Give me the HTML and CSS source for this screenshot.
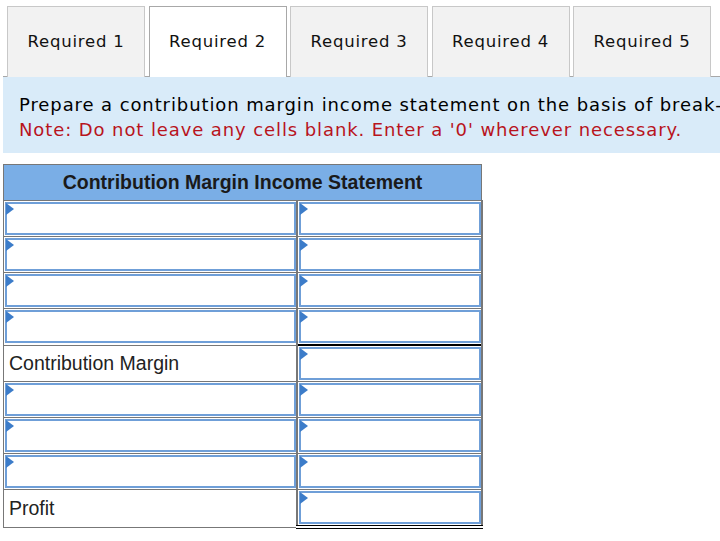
FILE: index.html
```html
<!DOCTYPE html>
<html>
<head>
<meta charset="utf-8">
<link rel="stylesheet" href="styles.css">
</head>
<body>
<div class="tabs">
  <div class="tab">Required 1</div>
  <div class="tab active">Required 2</div>
  <div class="tab">Required 3</div>
  <div class="tab">Required 4</div>
  <div class="tab">Required 5</div>
</div>
<div class="panel">
  <div class="line">Prepare a contribution margin income statement on the basis of break-even sales.</div>
  <div class="note">Note: Do not leave any cells blank. Enter a '0' wherever necessary.</div>
</div>
<table class="stmt">
  <colgroup><col class="c1"><col class="c2"></colgroup>
  <tr><th colspan="2">Contribution Margin Income Statement</th></tr>
  <tr><td><div class="inp"></div></td><td><div class="inp"></div></td></tr>
  <tr><td><div class="inp"></div></td><td><div class="inp"></div></td></tr>
  <tr><td><div class="inp"></div></td><td><div class="inp"></div></td></tr>
  <tr><td><div class="inp"></div></td><td><div class="inp"></div></td></tr>
  <tr><td class="label">Contribution Margin</td><td class="single"><div class="inp"></div></td></tr>
  <tr><td><div class="inp"></div></td><td><div class="inp"></div></td></tr>
  <tr><td><div class="inp"></div></td><td><div class="inp"></div></td></tr>
  <tr><td><div class="inp"></div></td><td><div class="inp"></div></td></tr>
  <tr><td class="label">Profit</td><td class="double"><div class="inp"></div></td></tr>
</table>
</body>
</html>
```
FILE: styles.css
```css
html, body {
  margin: 0;
  padding: 0;
  overflow: hidden;
  background: #fff;
}
body {
  width: 720px;
  height: 541px;
}
.tabs {
  display: flex;
  gap: 3.5px;
  padding: 6px 0 0 7px;
  height: 70px;
  font-family: "DejaVu Sans", Verdana, sans-serif;
  font-size: 16.5px;
  letter-spacing: 0.8px;
}
.tab {
  box-sizing: border-box;
  width: 138px;
  height: 71px;
  background: #f2f2f2;
  border: 1px solid #c8c8c8;
  border-bottom: none;
  display: flex;
  align-items: center;
  justify-content: center;
  padding-bottom: 2px;
  color: #111;
  position: relative;
  z-index: 1;
}
.tab.active {
  background: #fff;
  border-color: #a8a8a8;
}
.panel {
  margin-left: 3px;
  width: 760px;
  height: 77px;
  box-sizing: border-box;
  border-top: 1px solid #a8a8a8;
  background: #d9ebf9;
  padding: 15px 0 0 16px;
  white-space: nowrap;
  font-family: "DejaVu Sans", Verdana, sans-serif;
  font-size: 18px;
  letter-spacing: 0.9px;
  line-height: 25px;
  color: #000;
}
.note {
  color: #b8141d;
}
.stmt {
  margin: 11px 0 0 3px;
  border-collapse: collapse;
  width: 478px;
  table-layout: fixed;
  font-family: "Liberation Sans", Arial, sans-serif;
}
.c1 { width: 293px; }
.c2 { width: 185px; }
.stmt th {
  background: #7aaee6;
  border: 1px solid #777;
  height: 35px;
  padding: 0;
  font-size: 19.5px;
  font-weight: bold;
  color: #1a1a1a;
  text-align: center;
}
.stmt td {
  border: 1px solid #777;
  border-width: 1px 2px 1px 1px;
  height: 34px;
  padding: 1px 0 0 1px;
  vertical-align: top;
}
.stmt td.label {
  font-size: 19.5px;
  color: #222;
  vertical-align: middle;
  padding: 0 0 0 5px;
}
.inp {
  position: relative;
  box-sizing: border-box;
  height: 33px;
  border: 2px solid #6f9fd8;
  background: #fff;
}
.inp::before {
  content: "";
  position: absolute;
  left: -1px;
  top: -1px;
  border-style: solid;
  border-width: 6px 0 6px 8px;
  border-color: transparent transparent transparent #3c7cc9;
}
td.single {
  border-top: 2px solid #000;
}
td.double {
  border-bottom: 4px double #000;
}
```
